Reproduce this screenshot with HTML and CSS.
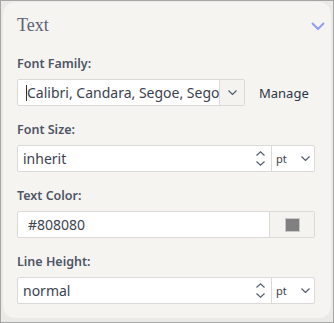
FILE: index.html
```html
<!DOCTYPE html>
<html lang="en">
<head>
    <meta charset="UTF-8">
    <meta name="viewport" content="width=device-width, initial-scale=1.0">
    <title>Text</title>
    <link rel="stylesheet" href="styles.css">
</head>
<body>
    <div class="frame">
        <section class="panel">
            <header class="panel-head">
                <h2>Text</h2>
                <svg class="collapse" width="14" height="8" viewBox="0 0 14 8">
                    <path d="M1 1 L7 7 L13 1" fill="none" stroke="#8e9bff" stroke-width="2"/>
                </svg>
            </header>

            <div class="field">
                <label>Font Family:</label>
                <div class="row">
                    <div class="combo family-combo">
                        <div class="box family"><span class="caret"></span>Calibri, Candara, Segoe, Segoe UI</div>
                        <div class="combo-btn">
                            <svg width="9" height="5" viewBox="0 0 9 5"><path d="M0.5 0.5 L4.5 4.5 L8.5 0.5" fill="none" stroke="#555e6e" stroke-width="1.2"/></svg>
                        </div>
                    </div>
                    <a class="manage">Manage</a>
                </div>
            </div>

            <div class="field">
                <label>Font Size:</label>
                <div class="combo">
                    <div class="box">inherit</div>
                    <div class="spin">
                        <svg width="9" height="15" viewBox="0 0 9 15">
                            <path d="M0.5 4.5 L4.5 0.8 L8.5 4.5" fill="none" stroke="#555e6e" stroke-width="1.2"/>
                            <path d="M0.5 10.5 L4.5 14.2 L8.5 10.5" fill="none" stroke="#555e6e" stroke-width="1.2"/>
                        </svg>
                    </div>
                    <div class="unit">pt
                        <svg width="9" height="5" viewBox="0 0 9 5"><path d="M0.5 0.5 L4.5 4.5 L8.5 0.5" fill="none" stroke="#555e6e" stroke-width="1.2"/></svg>
                    </div>
                </div>
            </div>

            <div class="field">
                <label>Text Color:</label>
                <div class="combo">
                    <div class="box color">#808080</div>
                    <div class="swatch-btn"><span class="swatch"></span></div>
                </div>
            </div>

            <div class="field">
                <label>Line Height:</label>
                <div class="combo">
                    <div class="box">normal</div>
                    <div class="spin">
                        <svg width="9" height="15" viewBox="0 0 9 15">
                            <path d="M0.5 4.5 L4.5 0.8 L8.5 4.5" fill="none" stroke="#555e6e" stroke-width="1.2"/>
                            <path d="M0.5 10.5 L4.5 14.2 L8.5 10.5" fill="none" stroke="#555e6e" stroke-width="1.2"/>
                        </svg>
                    </div>
                    <div class="unit">pt
                        <svg width="9" height="5" viewBox="0 0 9 5"><path d="M0.5 0.5 L4.5 4.5 L8.5 0.5" fill="none" stroke="#555e6e" stroke-width="1.2"/></svg>
                    </div>
                </div>
            </div>
        </section>
    </div>
</body>
</html>
```

FILE: styles.css
```css
/* Base */
body {
    margin: 0;
    font-family: 'Noto Sans', 'Liberation Sans', sans-serif;
    background-color: #ebe9e5;
}

.frame {
    box-sizing: border-box;
    width: 334px;
    height: 323px;
    border: 1px solid #a6a6a6;
    padding: 1px 2px 4px 2px;
}

/* Panel */
.panel {
    box-sizing: border-box;
    height: 100%;
    background-color: #f6f4f0;
    border-radius: 12px;
    padding: 11px 16px 0 14px;
}
.panel-head {
    display: flex;
    justify-content: space-between;
    align-items: center;
    height: 24px;
    margin-bottom: 18px;
}
.panel-head h2 {
    margin: 0;
    font-family: 'Liberation Serif', serif;
    font-weight: normal;
    font-size: 18px;
    line-height: 24px;
    color: #5b6376;
}
.collapse {
    margin-right: -10px;
    margin-top: 2px;
}

/* Fields */
.field {
    margin-bottom: 15px;
}
.field label {
    display: block;
    font-size: 12.5px;
    font-weight: 600;
    line-height: 18px;
    color: #4d5566;
    margin-bottom: 6px;
}
.row {
    display: flex;
    align-items: center;
}
.combo {
    display: flex;
    height: 27px;
    box-sizing: border-box;
    border: 1px solid #dcdad6;
    border-radius: 2px;
    background-color: #fff;
    flex: 1;
}
.combo.family-combo {
    flex: none;
    width: 228px;
}
.box {
    flex: 1;
    min-width: 0;
    display: flex;
    align-items: center;
    padding-left: 5px;
    font-size: 14px;
    color: #3c4250;
    white-space: nowrap;
    overflow: hidden;
}
.box.family {
    padding-left: 9px;
}
.box.color {
    padding-left: 10px;
}
.caret {
    display: inline-block;
    flex: none;
    width: 1px;
    height: 16px;
    background-color: #333;
    margin-left: -1px;
}
.combo-btn {
    flex: none;
    width: 24px;
    display: flex;
    align-items: center;
    justify-content: center;
    border-left: 1px solid #dcdad6;
    background-color: #f4f3f0;
}
.manage {
    margin-left: 14px;
    font-size: 13px;
    color: #2c3547;
}
.spin {
    width: 22px;
    display: flex;
    align-items: center;
    justify-content: center;
}
.unit {
    width: 43px;
    display: flex;
    align-items: center;
    justify-content: space-between;
    padding: 0 4px 0 4px;
    box-sizing: border-box;
    border-left: 1px solid #dcdad6;
    font-size: 11px;
    color: #3c4250;
}
.swatch-btn {
    width: 44px;
    display: flex;
    align-items: center;
    justify-content: center;
    border-left: 1px solid #dcdad6;
    background-color: #f4f3f0;
}
.swatch {
    width: 13px;
    height: 12px;
    background-color: #808080;
    border: 1px solid #c9c9c9;
}
```
